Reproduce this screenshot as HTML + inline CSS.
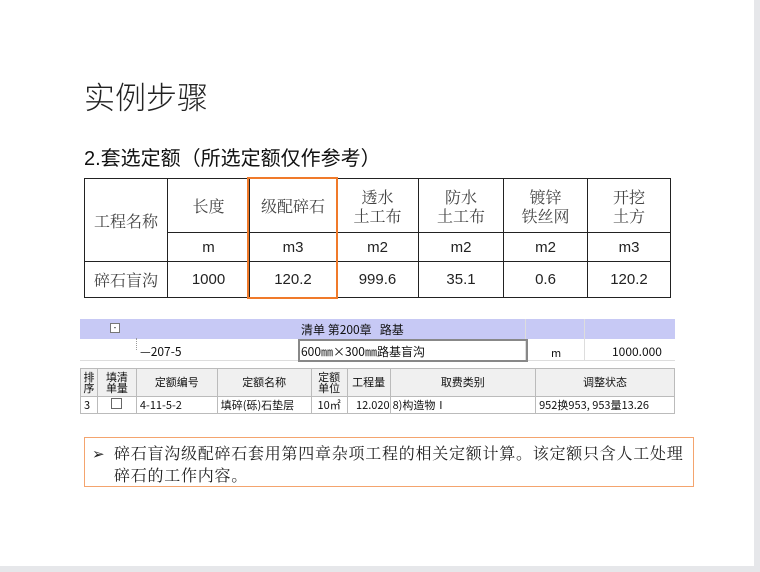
<!DOCTYPE html>
<html><head><meta charset="utf-8"><style>
body{margin:0;width:760px;height:572px;background:#e6e7ea;position:relative;overflow:hidden;font-family:"Liberation Sans","Noto Sans CJK SC",sans-serif;}
.slide{position:absolute;left:0;top:0;width:754px;height:566px;background:#fff;}
.a{position:absolute;}
table{border-collapse:collapse;position:absolute;}
.t1 td{border:1px solid #222;text-align:center;font-size:15px;color:#222;padding:0;line-height:19px;}
.t1 .cj{font-family:"Noto Serif CJK SC",serif;color:#444;font-size:16px;}
.sw{font-family:"WenQuanYi Zen Hei","Noto Sans CJK SC",sans-serif;font-size:11px;color:#111;}
.sw td{border:1px solid #bbb;padding:0 3px;white-space:nowrap;}
</style></head><body><div class="slide">
<div class="a" style="left:84px;top:76px;font-size:31px;color:#222;font-family:'Noto Sans CJK SC',sans-serif;font-weight:300;line-height:40px">实例步骤</div>
<div class="a" style="left:84px;top:145px;font-size:20px;color:#111;font-family:'Liberation Sans','Noto Sans CJK SC',sans-serif;line-height:28px">2.套选定额（所选定额仅作参考）</div>
<table class="t1" style="left:84px;top:178px;width:587px">
<colgroup><col style="width:83px"><col style="width:82px"><col style="width:87px"><col style="width:82px"><col style="width:85px"><col style="width:84px"><col style="width:83px"></colgroup>
<tr style="height:54px"><td class="cj" rowspan="2">工程名称</td><td class="cj">长度</td><td class="cj">级配碎石</td><td class="cj">透水<br>土工布</td><td class="cj">防水<br>土工布</td><td class="cj">镀锌<br>铁丝网</td><td class="cj">开挖<br>土方</td></tr>
<tr style="height:29px"><td>m</td><td>m3</td><td>m2</td><td>m2</td><td>m2</td><td>m3</td></tr>
<tr style="height:36px"><td class="cj">碎石盲沟</td><td>1000</td><td>120.2</td><td>999.6</td><td>35.1</td><td>0.6</td><td>120.2</td></tr>
</table>
<div class="a" style="left:247px;top:177px;width:87px;height:118px;border:2px solid #f07a2a"></div>
<div class="a sw" style="left:80px;top:319px;width:595px;height:20px;background:#c7c9f5"></div>
<div class="a" style="left:110px;top:323px;width:8px;height:8px;border:1px solid #777;background:#fff;font-size:8px;line-height:8px;text-align:center">-</div>
<div class="a sw" style="left:301px;top:321px;font-size:12px">清单 第200章&nbsp;&nbsp;&nbsp;路基</div>
<div class="a" style="left:525px;top:319px;width:1px;height:42px;background:#ddd"></div>
<div class="a" style="left:584px;top:319px;width:1px;height:42px;background:#ddd"></div>
<div class="a" style="left:80px;top:360px;width:595px;height:1px;background:#ddd"></div>
<div class="a" style="left:136px;top:338px;width:1px;height:12px;border-left:1px dotted #999"></div>
<div class="a sw" style="left:140px;top:343px;font-size:12px">—207-5</div>
<div class="a" style="left:298px;top:339px;width:226px;height:19px;border:2px solid #888"></div>
<div class="a sw" style="left:301px;top:343px;font-size:12px">600㎜×300㎜路基盲沟</div>
<div class="a sw" style="left:551px;top:345px">m</div>
<div class="a sw" style="left:612px;top:343px;font-size:12px">1000.000</div>
<table class="sw" style="left:80px;top:368px;width:595px">
<colgroup><col style="width:17px"><col style="width:39px"><col style="width:81px"><col style="width:94px"><col style="width:36px"><col style="width:43px"><col style="width:146px"><col style="width:139px"></colgroup>
<tr style="height:28px;background:#f0f0f0;text-align:center;line-height:11px"><td style="padding:0">排<br>序</td><td>填清<br>单量</td><td>定额编号</td><td>定额名称</td><td style="padding:0">定额<br>单位</td><td>工程量</td><td>取费类别</td><td>调整状态</td></tr>
<tr style="height:17px"><td>3</td><td style="text-align:center"><span style="display:inline-block;width:9px;height:9px;border:1px solid #666"></span></td><td>4-11-5-2</td><td>填碎(砾)石垫层</td><td style="text-align:center">10㎡</td><td style="text-align:right;padding:0">12.020</td><td style="padding:0 0 0 2px">8)构造物Ⅰ</td><td>952换953, 953量13.26</td></tr>
</table>
<div class="a" style="left:84px;top:437px;width:608px;height:48px;border:1px solid #f4a46e"></div>
<div class="a" style="left:92px;top:443px;font-size:15px;line-height:21px;color:#222;font-family:'Noto Serif CJK SC',serif">➢</div>
<div class="a" style="left:114px;top:442px;font-size:16px;letter-spacing:0.75px;line-height:22px;color:#222;font-family:'Noto Serif CJK SC',serif;width:578px;white-space:nowrap">碎石盲沟级配碎石套用第四章杂项工程的相关定额计算。该定额只含人工处理<br>碎石的工作内容。</div>
</div></body></html>
